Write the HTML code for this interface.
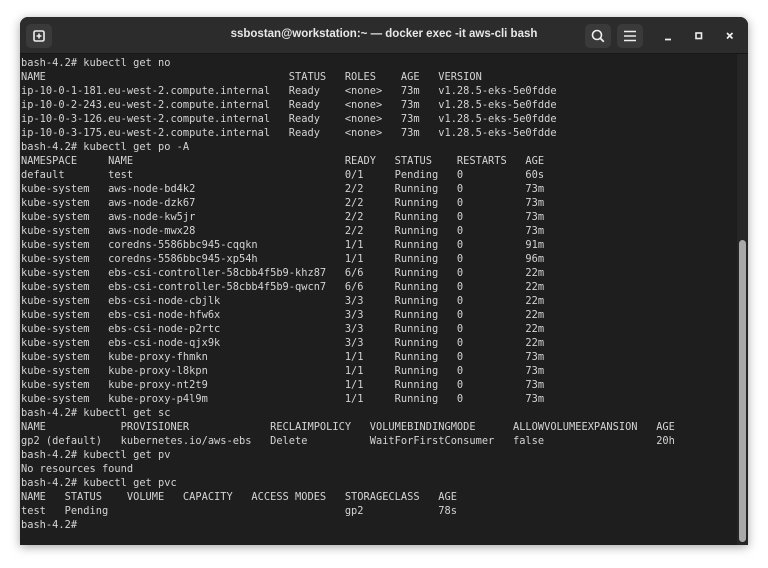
<!DOCTYPE html>
<html><head><style>
html,body{margin:0;padding:0;width:768px;height:568px;background:#fff;overflow:hidden}
.win{position:absolute;left:20px;top:17px;width:728px;height:528px;background:#1e1e1e;border-radius:8px 8px 0 0;box-shadow:0 2px 10px rgba(0,0,0,.35);overflow:hidden}
.tb{position:absolute;left:0;top:0;width:728px;height:36px;background:#2c2c2c;border-bottom:1px solid #161616}
.title{position:absolute;left:0;right:0;top:11px;text-align:center;color:#e8e8e8;font:bold 11.5px "Liberation Sans",sans-serif}
.btn{position:absolute;top:7px;width:26px;height:24px;background:#3a3a3a;border-radius:5px}
pre{position:absolute;left:1px;top:39px;margin:0;color:#d4d4d4;font:10.35px/14px "DejaVu Sans Mono","Liberation Mono",monospace}
.sb{position:absolute;left:717px;top:37px;width:11px;height:491px;background:#262626}
.th{position:absolute;left:719px;top:223px;width:7px;height:302px;background:#a9a9a9;border-radius:4px}
</style></head><body>
<div class="win">
<div class="tb">
<div class="btn" style="left:6px"><svg width="26" height="24"><rect x="8" y="7" width="10" height="10" rx="1.5" fill="none" stroke="#eee" stroke-width="1.6"/><path d="M13 9.5v5M10.5 12h5" stroke="#eee" stroke-width="1.6"/></svg></div>
<div class="title">ssbostan@workstation:~ — docker exec -it aws-cli bash</div>
<div class="btn" style="left:565px"><svg width="26" height="24"><circle cx="12" cy="11" r="4.5" fill="none" stroke="#eee" stroke-width="1.6"/><path d="M15.3 14.3l3.5 3.5" stroke="#eee" stroke-width="1.8"/></svg></div>
<div class="btn" style="left:597px"><svg width="26" height="24"><path d="M7 7.5h12M7 12h12M7 16.5h12" stroke="#eee" stroke-width="1.6"/></svg></div>
<svg style="position:absolute;left:640px;top:10px" width="80" height="18"><path d="M5 12.5h6" stroke="#eee" stroke-width="1.8"/><rect x="36" y="6" width="5.5" height="5.5" fill="none" stroke="#eee" stroke-width="1.6"/><path d="M67 6l5.5 5.5M72.5 6L67 11.5" stroke="#eee" stroke-width="1.7"/></svg>
</div>
<pre>bash-4.2# kubectl get no
NAME                                       STATUS   ROLES    AGE   VERSION
ip-10-0-1-181.eu-west-2.compute.internal   Ready    &lt;none&gt;   73m   v1.28.5-eks-5e0fdde
ip-10-0-2-243.eu-west-2.compute.internal   Ready    &lt;none&gt;   73m   v1.28.5-eks-5e0fdde
ip-10-0-3-126.eu-west-2.compute.internal   Ready    &lt;none&gt;   73m   v1.28.5-eks-5e0fdde
ip-10-0-3-175.eu-west-2.compute.internal   Ready    &lt;none&gt;   73m   v1.28.5-eks-5e0fdde
bash-4.2# kubectl get po -A
NAMESPACE     NAME                                  READY   STATUS    RESTARTS   AGE
default       test                                  0/1     Pending   0          60s
kube-system   aws-node-bd4k2                        2/2     Running   0          73m
kube-system   aws-node-dzk67                        2/2     Running   0          73m
kube-system   aws-node-kw5jr                        2/2     Running   0          73m
kube-system   aws-node-mwx28                        2/2     Running   0          73m
kube-system   coredns-5586bbc945-cqqkn              1/1     Running   0          91m
kube-system   coredns-5586bbc945-xp54h              1/1     Running   0          96m
kube-system   ebs-csi-controller-58cbb4f5b9-khz87   6/6     Running   0          22m
kube-system   ebs-csi-controller-58cbb4f5b9-qwcn7   6/6     Running   0          22m
kube-system   ebs-csi-node-cbjlk                    3/3     Running   0          22m
kube-system   ebs-csi-node-hfw6x                    3/3     Running   0          22m
kube-system   ebs-csi-node-p2rtc                    3/3     Running   0          22m
kube-system   ebs-csi-node-qjx9k                    3/3     Running   0          22m
kube-system   kube-proxy-fhmkn                      1/1     Running   0          73m
kube-system   kube-proxy-l8kpn                      1/1     Running   0          73m
kube-system   kube-proxy-nt2t9                      1/1     Running   0          73m
kube-system   kube-proxy-p4l9m                      1/1     Running   0          73m
bash-4.2# kubectl get sc
NAME            PROVISIONER             RECLAIMPOLICY   VOLUMEBINDINGMODE      ALLOWVOLUMEEXPANSION   AGE
gp2 (default)   kubernetes.io/aws-ebs   Delete          WaitForFirstConsumer   false                  20h
bash-4.2# kubectl get pv
No resources found
bash-4.2# kubectl get pvc
NAME   STATUS    VOLUME   CAPACITY   ACCESS MODES   STORAGECLASS   AGE
test   Pending                                      gp2            78s
bash-4.2# </pre>
<div class="sb"></div><div class="th"></div>
</div>
</body></html>
